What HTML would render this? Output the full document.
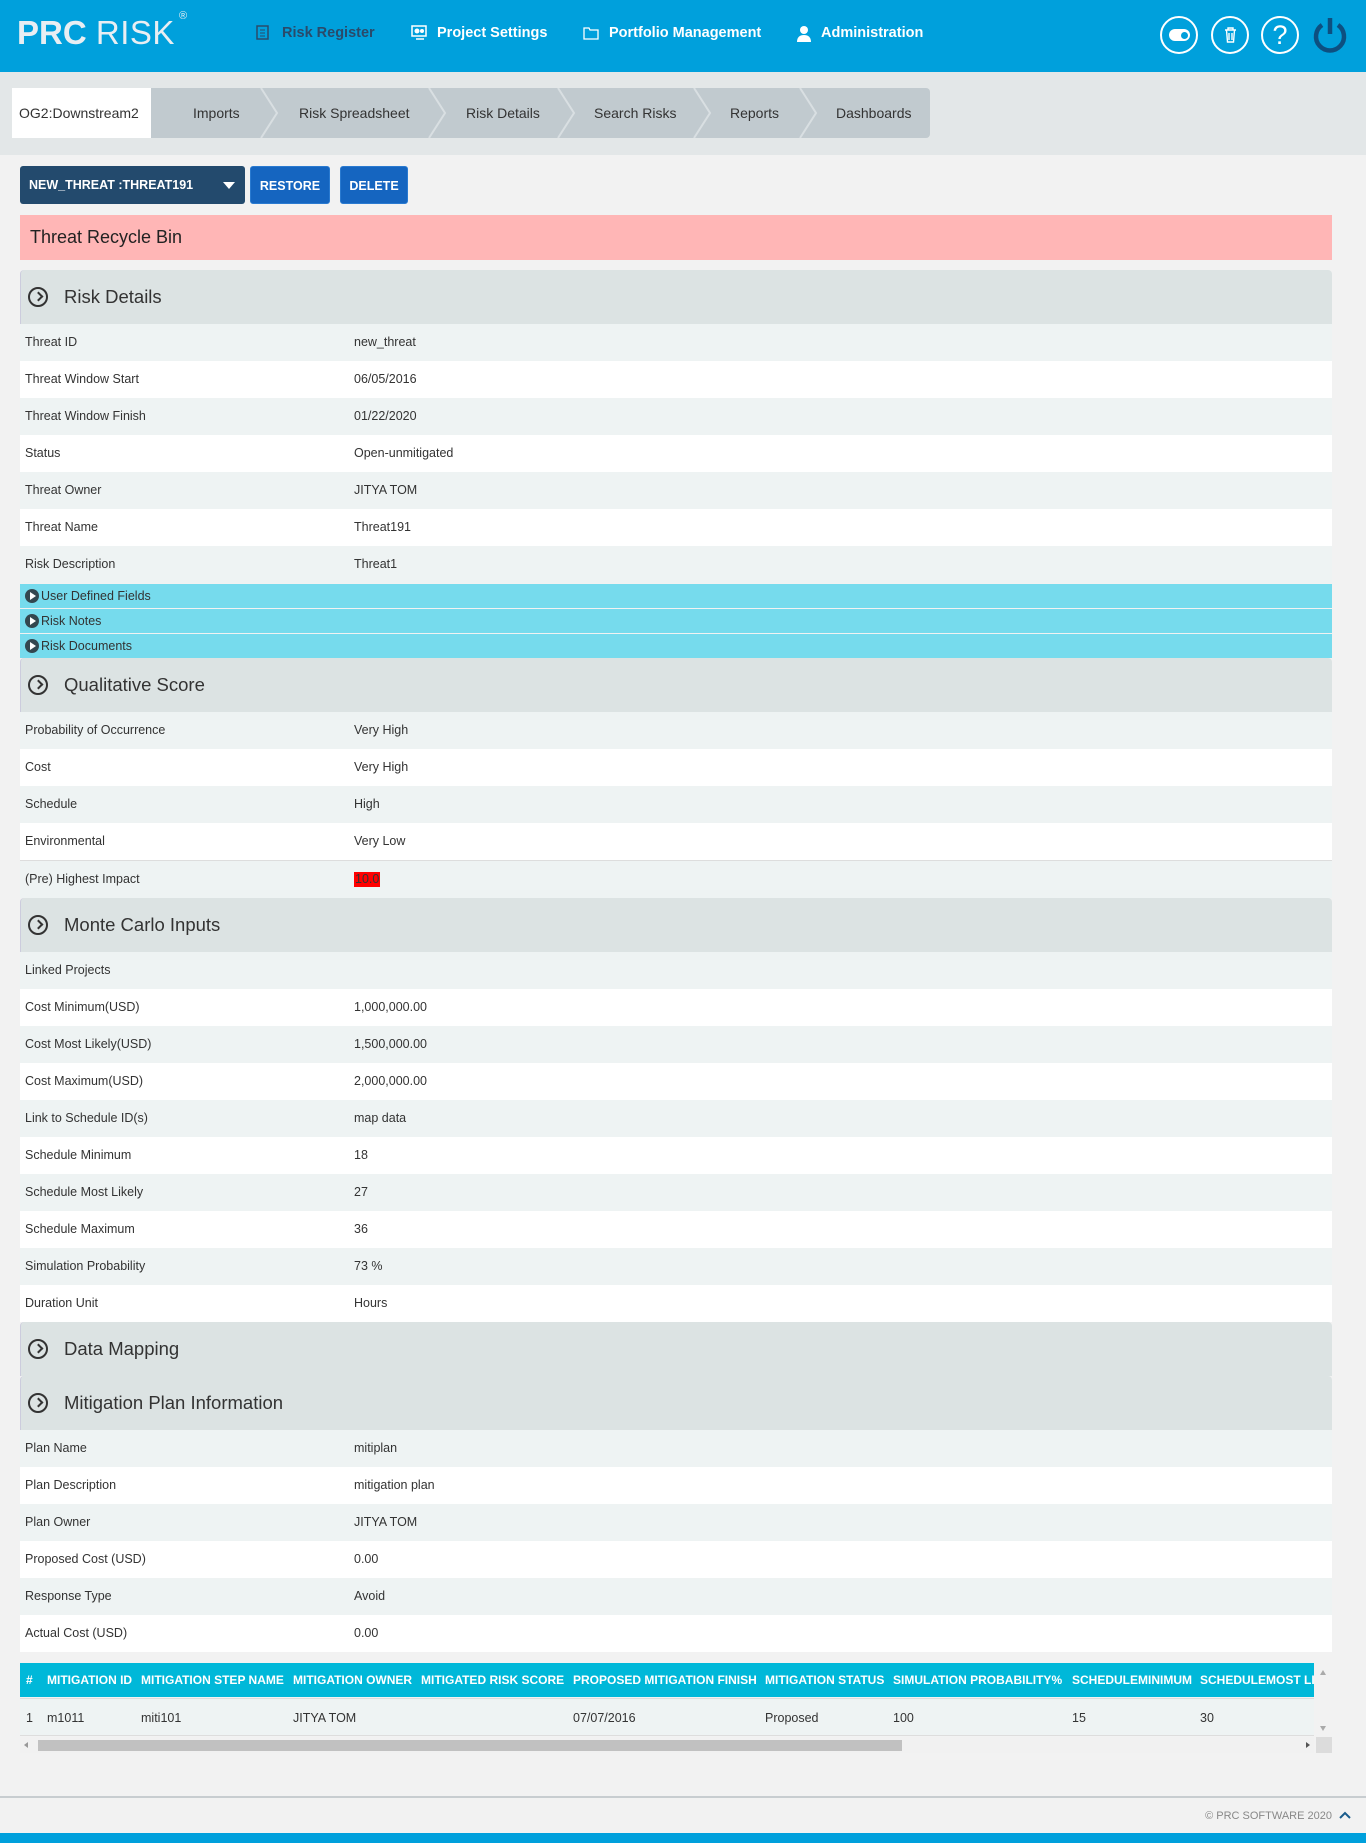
<!DOCTYPE html>
<html><head><meta charset="utf-8">
<style>
*{box-sizing:border-box;margin:0;padding:0}
body{width:1366px;height:1843px;background:#f2f2f2;font-family:"Liberation Sans",sans-serif;color:#333;position:relative;overflow:hidden}
.hdr{position:absolute;left:0;top:0;width:1366px;height:72px;background:#00a0dc}
.logo{position:absolute;left:17px;top:14px;font-size:33px;color:#e8eef3;white-space:nowrap}
.logo b{font-weight:bold}
.logo span{font-weight:normal;letter-spacing:0.5px}
.logo sup{font-size:11px;position:absolute;top:-4px;left:162px}
.nav{position:absolute;top:25px;font-size:14.5px;font-weight:bold;color:#fff;white-space:nowrap}
.nav svg{position:absolute;left:-26px;top:0}
.ic{position:absolute;top:16px;width:38px;height:38px;border:2px solid #fff;border-radius:50%}
.tabbar{position:absolute;left:0;top:72px;width:1366px;height:83px;background:#e3e7e8}
.tabs{position:absolute;left:12px;top:88px;width:918px;height:50px;background:#c1cacf;border-radius:0 4px 4px 0;overflow:hidden}
.tab{position:absolute;top:0;height:50px;line-height:50px;font-size:14px;color:#333;white-space:nowrap}
.chev{position:absolute;top:0;left:0}
.sel{position:absolute;left:20px;top:166px;width:225px;height:38px;background:#234a6d;border-radius:3px;color:#fff;font-size:12.5px;font-weight:bold;line-height:38px;padding-left:9px}
.btn{position:absolute;top:166px;height:38px;background:#1565c0;border-radius:3px;color:#fff;font-size:12.5px;font-weight:bold;line-height:38px;text-align:center;border:1px solid #2a7ad0}
.pink{position:absolute;left:20px;top:215px;width:1312px;height:45px;background:#ffb6b6;font-size:18px;line-height:45px;padding-left:10px;color:#222}
.sec{position:absolute;left:20px;width:1312px;height:54px;background:#dce3e3;border-radius:4px 4px 0 0;border-left:1px solid #ccd;font-size:18.5px;line-height:54px;padding-left:43px;color:#333}
.sec::before{content:"";position:absolute;left:7px;top:17px;width:16px;height:16px;border:2px solid #333;border-radius:50%}
.sec::after{content:"";position:absolute;left:14px;top:23px;width:5px;height:5px;border-right:2px solid #333;border-top:2px solid #333;transform:rotate(45deg)}
.row{position:absolute;left:20px;width:1312px;height:37px;font-size:12.5px;line-height:37px;color:#333}
.row.a{background:#eef3f3}.row.b{background:#fff}
.row .l{position:absolute;left:5px}.row .v{position:absolute;left:334px}
.blue{position:absolute;left:20px;width:1312px;height:24px;background:#76dbed;font-size:12.5px;line-height:24px;padding-left:21px;color:#333}
.blue::before{content:"";position:absolute;left:5px;top:5px;width:14px;height:14px;border-radius:50%;background:#33474f}
.blue::after{content:"";position:absolute;left:10px;top:8px;border-left:6px solid #fff;border-top:4px solid transparent;border-bottom:4px solid transparent}
.th{position:absolute;left:20px;top:1663px;width:1294px;height:34px;background:#00b8d9;color:#fff;font-size:12px;font-weight:bold;line-height:34px;overflow:hidden;white-space:nowrap}
.td{position:absolute;left:20px;top:1698px;width:1294px;height:38px;background:#eef3f3;border-top:1px solid #ddd;border-bottom:1px solid #ddd;font-size:12.5px;line-height:38px;overflow:hidden;white-space:nowrap}
.th span,.td span{position:absolute}
</style></head><body>
<div class="hdr">
 <div class="logo"><b>PRC</b> <span>RISK</span><sup>®</sup></div>
 <div class="nav" style="left:282px;color:#2a4a6a"><svg width="14" height="16" viewBox="0 0 14 16"><rect x="1" y="1" width="11" height="13" fill="none" stroke="#2a4a6a" stroke-width="1.5"/><path d="M4 5h5M4 8h5M4 11h5" stroke="#2a4a6a"/></svg>Risk Register</div>
 <div class="nav" style="left:437px"><svg width="18" height="16" viewBox="0 0 18 16"><rect x="1" y="1" width="14" height="10" fill="none" stroke="#fff" stroke-width="1.5"/><circle cx="6" cy="6" r="2.5" fill="#fff"/><circle cx="11" cy="6" r="2" fill="#fff"/><path d="M5 14h8" stroke="#fff" stroke-width="1.5"/></svg>Project Settings</div>
 <div class="nav" style="left:609px"><svg width="16" height="16" viewBox="0 0 16 16"><path d="M1 3h5l1 2h8v9H1z" fill="none" stroke="#fff" stroke-width="1.3"/></svg>Portfolio Management</div>
 <div class="nav" style="left:821px"><svg width="18" height="18" viewBox="0 0 18 18"><circle cx="9" cy="5" r="4" fill="#fff"/><path d="M2 17c0-5 3-7 7-7s7 2 7 7z" fill="#fff"/></svg>Administration</div>
 <div class="ic" style="left:1160px"><div style="position:absolute;left:7px;top:11px;width:21px;height:12px;background:#fff;border-radius:6px"></div><div style="position:absolute;left:19px;top:14px;width:7px;height:7px;background:#00a0dc;border-radius:50%"></div></div>
 <div class="ic" style="left:1211px"><svg style="position:absolute;left:11px;top:9px" width="13" height="16" viewBox="0 0 13 16"><path d="M1 3h11M4 3V1h5v2M2.5 3l1 12h6l1-12M5 6v7M8 6v7" fill="none" stroke="#fff" stroke-width="1.4"/></svg></div>
 <div class="ic" style="left:1261px;color:#fff;font-size:27px;line-height:34px;text-align:center">?</div>
 <svg style="position:absolute;left:1311px;top:16px" width="38" height="40" viewBox="0 0 38 40"><path d="M11 9A14 14 0 1 0 27 9" fill="none" stroke="#0d4f80" stroke-width="4.5"/><path d="M19 2v16" stroke="#0d4f80" stroke-width="4.5"/></svg>
</div>
<div class="tabbar"></div>
<div class="tabs">
 <div style="position:absolute;left:0;top:0;width:139px;height:50px;background:#fff"></div>
 <div class="tab" style="left:7px">OG2:Downstream2</div>
 <div class="tab" style="left:181px">Imports</div>
 <div class="tab" style="left:287px">Risk Spreadsheet</div>
 <div class="tab" style="left:454px">Risk Details</div>
 <div class="tab" style="left:582px">Search Risks</div>
 <div class="tab" style="left:718px">Reports</div>
 <div class="tab" style="left:824px">Dashboards</div>
 <svg class="chev" width="918" height="50"><g fill="none" stroke="#d9dfe2" stroke-width="2"><path d="M249 0l16 25-16 25"/><path d="M417 0l16 25-16 25"/><path d="M546 0l16 25-16 25"/><path d="M682 0l16 25-16 25"/><path d="M788 0l16 25-16 25"/></g></svg>
</div>
<div class="sel">NEW_THREAT :THREAT191<div style="position:absolute;right:10px;top:16px;border-top:7px solid #fff;border-left:6px solid transparent;border-right:6px solid transparent"></div></div>
<div class="btn" style="left:250px;width:80px">RESTORE</div>
<div class="btn" style="left:340px;width:68px">DELETE</div>
<div class="pink">Threat Recycle Bin</div>

<div class="sec" style="top:270px">Risk Details</div>
<div class="row a" style="top:324px"><span class="l">Threat ID</span><span class="v">new_threat</span></div>
<div class="row b" style="top:361px"><span class="l">Threat Window Start</span><span class="v">06/05/2016</span></div>
<div class="row a" style="top:398px"><span class="l">Threat Window Finish</span><span class="v">01/22/2020</span></div>
<div class="row b" style="top:435px"><span class="l">Status</span><span class="v">Open-unmitigated</span></div>
<div class="row a" style="top:472px"><span class="l">Threat Owner</span><span class="v">JITYA TOM</span></div>
<div class="row b" style="top:509px"><span class="l">Threat Name</span><span class="v">Threat191</span></div>
<div class="row a" style="top:546px"><span class="l">Risk Description</span><span class="v">Threat1</span></div>
<div class="blue" style="top:584px">User Defined Fields</div>
<div class="blue" style="top:609px">Risk Notes</div>
<div class="blue" style="top:634px">Risk Documents</div>

<div class="sec" style="top:658px">Qualitative Score</div>
<div class="row a" style="top:712px"><span class="l">Probability of Occurrence</span><span class="v">Very High</span></div>
<div class="row b" style="top:749px"><span class="l">Cost</span><span class="v">Very High</span></div>
<div class="row a" style="top:786px"><span class="l">Schedule</span><span class="v">High</span></div>
<div class="row b" style="top:823px"><span class="l">Environmental</span><span class="v">Very Low</span></div>
<div class="row a" style="top:860px;height:38px;border-top:1px solid #ddd"><span class="l">(Pre) Highest Impact</span><span class="v" style="background:#f00;line-height:15px;top:11px;padding:0 1px">10.0</span></div>

<div class="sec" style="top:898px">Monte Carlo Inputs</div>
<div class="row a" style="top:952px"><span class="l">Linked Projects</span><span class="v"></span></div>
<div class="row b" style="top:989px"><span class="l">Cost Minimum(USD)</span><span class="v">1,000,000.00</span></div>
<div class="row a" style="top:1026px"><span class="l">Cost Most Likely(USD)</span><span class="v">1,500,000.00</span></div>
<div class="row b" style="top:1063px"><span class="l">Cost Maximum(USD)</span><span class="v">2,000,000.00</span></div>
<div class="row a" style="top:1100px"><span class="l">Link to Schedule ID(s)</span><span class="v">map data</span></div>
<div class="row b" style="top:1137px"><span class="l">Schedule Minimum</span><span class="v">18</span></div>
<div class="row a" style="top:1174px"><span class="l">Schedule Most Likely</span><span class="v">27</span></div>
<div class="row b" style="top:1211px"><span class="l">Schedule Maximum</span><span class="v">36</span></div>
<div class="row a" style="top:1248px"><span class="l">Simulation Probability</span><span class="v">73 %</span></div>
<div class="row b" style="top:1285px"><span class="l">Duration Unit</span><span class="v">Hours</span></div>

<div class="sec" style="top:1322px">Data Mapping</div>
<div class="sec" style="top:1376px">Mitigation Plan Information</div>
<div class="row a" style="top:1430px"><span class="l">Plan Name</span><span class="v">mitiplan</span></div>
<div class="row b" style="top:1467px"><span class="l">Plan Description</span><span class="v">mitigation plan</span></div>
<div class="row a" style="top:1504px"><span class="l">Plan Owner</span><span class="v">JITYA TOM</span></div>
<div class="row b" style="top:1541px"><span class="l">Proposed Cost (USD)</span><span class="v">0.00</span></div>
<div class="row a" style="top:1578px"><span class="l">Response Type</span><span class="v">Avoid</span></div>
<div class="row b" style="top:1615px"><span class="l">Actual Cost (USD)</span><span class="v">0.00</span></div>

<div class="th"><span style="left:6px">#</span><span style="left:27px">MITIGATION ID</span><span style="left:121px">MITIGATION STEP NAME</span><span style="left:273px">MITIGATION OWNER</span><span style="left:401px">MITIGATED RISK SCORE</span><span style="left:553px">PROPOSED MITIGATION FINISH</span><span style="left:745px">MITIGATION STATUS</span><span style="left:873px">SIMULATION PROBABILITY%</span><span style="left:1052px">SCHEDULEMINIMUM</span><span style="left:1180px">SCHEDULEMOST LIKELY</span></div>
<div class="td"><span style="left:6px">1</span><span style="left:27px">m1011</span><span style="left:121px">miti101</span><span style="left:273px">JITYA TOM</span><span style="left:553px">07/07/2016</span><span style="left:745px">Proposed</span><span style="left:873px">100</span><span style="left:1052px">15</span><span style="left:1180px">30</span></div>
<div style="position:absolute;left:20px;top:1737px;width:1294px;height:16px;background:#f1f1f1"></div>
<div style="position:absolute;left:38px;top:1740px;width:864px;height:11px;background:#c1c1c1"></div>
<div style="position:absolute;left:24px;top:1742px;border-right:4px solid #999;border-top:3px solid transparent;border-bottom:3px solid transparent"></div>
<div style="position:absolute;left:1306px;top:1742px;border-left:4px solid #555;border-top:3px solid transparent;border-bottom:3px solid transparent"></div>
<div style="position:absolute;left:1316px;top:1737px;width:16px;height:16px;background:#dcdcdc"></div>
<div style="position:absolute;left:1320px;top:1670px;border-bottom:5px solid #aaa;border-left:3px solid transparent;border-right:3px solid transparent"></div>
<div style="position:absolute;left:1320px;top:1726px;border-top:5px solid #aaa;border-left:3px solid transparent;border-right:3px solid transparent"></div>

<div style="position:absolute;left:0;top:1796px;width:1366px;height:2px;background:#c8cdd0"></div>
<div style="position:absolute;right:34px;top:1810px;font-size:11px;color:#888">© PRC SOFTWARE 2020</div>
<svg style="position:absolute;left:1339px;top:1810px" width="12" height="10" viewBox="0 0 12 10"><path d="M1 8l5-5 5 5" fill="none" stroke="#1a5c8c" stroke-width="2"/></svg>
<div style="position:absolute;left:0;top:1833px;width:1366px;height:10px;background:#00a0dc"></div>
</body></html>
